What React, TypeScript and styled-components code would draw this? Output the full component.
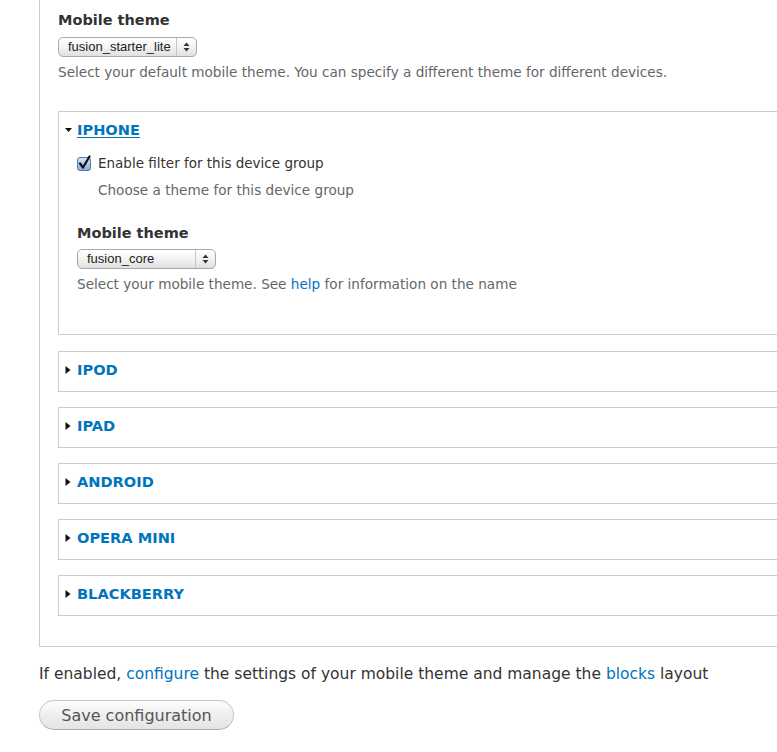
import React from 'react';
import styled, { createGlobalStyle } from 'styled-components';

const Global = createGlobalStyle`
  html, body { margin: 0; padding: 0; background: #fff; overflow: hidden; }
  body { font-family: "DejaVu Sans", Verdana, sans-serif; color: #333; }
`;

const Page = styled.div`
  padding-left: 39px;
`;

const OuterFieldset = styled.div`
  border-left: 1px solid #ccc;
  border-bottom: 1px solid #ccc;
  padding: 11px 0 30px 18px;
`;

const FieldLabel = styled.div<{ $top?: number }>`
  font-size: 14.5px;
  font-weight: bold;
  line-height: 18px;
  color: #333;
  margin-top: ${p => p.$top ?? 0}px;
`;

const SelectBox = styled.div<{ $top: number }>`
  display: flex;
  align-items: stretch;
  width: 139px;
  height: 20px;
  box-sizing: border-box;
  margin-top: ${p => p.$top}px;
  border: 1px solid #a9a9a9;
  border-radius: 5px;
  background: linear-gradient(#ffffff, #f3f3f3 50%, #e0e0e0);
  box-shadow: inset 0 1px 0 #fff;
  font-family: "Liberation Sans", Arial, sans-serif;
  font-size: 13px;
  color: #222;
`;

const SelectText = styled.span`
  flex: 1;
  padding-left: 9px;
  line-height: 18px;
  white-space: nowrap;
`;

const SelectArrows = styled.span`
  width: 19px;
  border-left: 1px solid #c6c6c6;
  display: flex;
  align-items: center;
  justify-content: center;
`;

const Description = styled.div<{ $top?: number; $indent?: number }>`
  font-size: 13.6px;
  line-height: 16px;
  color: #666;
  margin-top: ${p => p.$top ?? 7}px;
  padding-left: ${p => p.$indent ?? 0}px;
  white-space: nowrap;
`;

const Link = styled.a`
  color: #0074bd;
  text-decoration: none;
`;

const Fieldset = styled.div<{ $top: number; $open?: boolean }>`
  margin-top: ${p => p.$top}px;
  border: 1px solid #ccc;
  border-right: none;
  padding: 8px 0 ${p => (p.$open ? 42 : 11)}px 18px;
`;

const Legend = styled.div`
  display: flex;
  align-items: center;
  height: 20px;
  margin-left: -12px;
`;

const TriangleSlot = styled.span`
  width: 12px;
  display: flex;
  align-items: center;
  justify-content: flex-start;
`;

const LegendLink = styled.a<{ $open?: boolean }>`
  font-size: 14.6px;
  font-weight: bold;
  color: #0074bd;
  text-transform: uppercase;
  text-decoration: ${p => (p.$open ? 'underline' : 'none')};
  text-underline-offset: 2px;
  line-height: 20px;
  white-space: nowrap;
`;

const CheckRow = styled.label`
  display: flex;
  align-items: center;
  gap: 6px;
  margin-top: 14px;
  height: 18px;
  font-size: 13.5px;
  color: #333;
  white-space: nowrap;
`;

const Footer = styled.p`
  margin: 17px 0 0;
  font-size: 15.5px;
  line-height: 20px;
  color: #333;
  white-space: nowrap;
`;

const SaveButton = styled.button`
  display: block;
  margin-top: 16px;
  width: 195px;
  height: 30px;
  padding: 0;
  border: 1px solid #c8c8c8;
  border-bottom-color: #adadad;
  border-radius: 15px;
  background: linear-gradient(#fdfdfd, #ececec 60%, #e4e4e4);
  font-family: "DejaVu Sans", Verdana, sans-serif;
  font-size: 16px;
  color: #555;
`;

const Arrows = () => (
  <svg width="7" height="10" viewBox="0 0 7 10">
    <path d="M3.5 0.5 L6.5 4 L0.5 4 Z" fill="#333" />
    <path d="M0.5 6 L6.5 6 L3.5 9.5 Z" fill="#333" />
  </svg>
);

const Select = ({ value, top }: { value: string; top: number }) => (
  <SelectBox $top={top}>
    <SelectText>{value}</SelectText>
    <SelectArrows>
      <Arrows />
    </SelectArrows>
  </SelectBox>
);

const Triangle = ({ open }: { open?: boolean }) =>
  open ? (
    <svg width="7" height="4" viewBox="0 0 7 4">
      <path d="M0 0 L7 0 L3.5 4 Z" fill="#111" />
    </svg>
  ) : (
    <svg width="6" height="8" viewBox="0 0 6 8">
      <path d="M0.5 0 L5.5 4 L0.5 8 Z" fill="#111" />
    </svg>
  );

const Checkbox = () => (
  <svg width="15" height="16" viewBox="0 0 15 16">
    <defs>
      <linearGradient id="cb" x1="0" y1="0" x2="0" y2="1">
        <stop offset="0" stopColor="#dbe9f8" />
        <stop offset="0.5" stopColor="#a9c9ec" />
        <stop offset="1" stopColor="#7fb0e2" />
      </linearGradient>
    </defs>
    <rect x="0.5" y="2.5" width="13" height="13" rx="2.5" fill="url(#cb)" stroke="#56789e" />
    <path d="M3 8.5 L6 12.5 L12.5 1.5" fill="none" stroke="#111" strokeWidth="2.2" strokeLinecap="round" strokeLinejoin="round" />
  </svg>
);

const collapsed = ['iPod', 'iPad', 'Android', 'Opera Mini', 'BlackBerry'];

export default function App() {
  return (
    <>
      <Global />
      <Page>
        <OuterFieldset>
          <FieldLabel>Mobile theme</FieldLabel>
          <Select value="fusion_starter_lite" top={8} />
          <Description>
            Select your default mobile theme. You can specify a different theme for different devices.
          </Description>

          <Fieldset $top={31} $open>
            <Legend>
              <TriangleSlot>
                <Triangle open />
              </TriangleSlot>
              <LegendLink href="#" $open>
                iPhone
              </LegendLink>
            </Legend>
            <CheckRow>
              <Checkbox />
              Enable filter for this device group
            </CheckRow>
            <Description $top={10} $indent={21}>
              Choose a theme for this device group
            </Description>
            <FieldLabel $top={26}>Mobile theme</FieldLabel>
            <Select value="fusion_core" top={7} />
            <Description>
              Select your mobile theme. See <Link href="#">help</Link> for information on the name
            </Description>
          </Fieldset>

          {collapsed.map((name, i) => (
            <Fieldset key={name} $top={i === 0 ? 16 : 15}>
              <Legend>
                <TriangleSlot>
                  <Triangle />
                </TriangleSlot>
                <LegendLink href="#">{name}</LegendLink>
              </Legend>
            </Fieldset>
          ))}
        </OuterFieldset>

        <Footer>
          If enabled, <Link href="#">configure</Link> the settings of your mobile theme and manage the{' '}
          <Link href="#">blocks</Link> layout
        </Footer>
        <SaveButton type="button">Save configuration</SaveButton>
      </Page>
    </>
  );
}
